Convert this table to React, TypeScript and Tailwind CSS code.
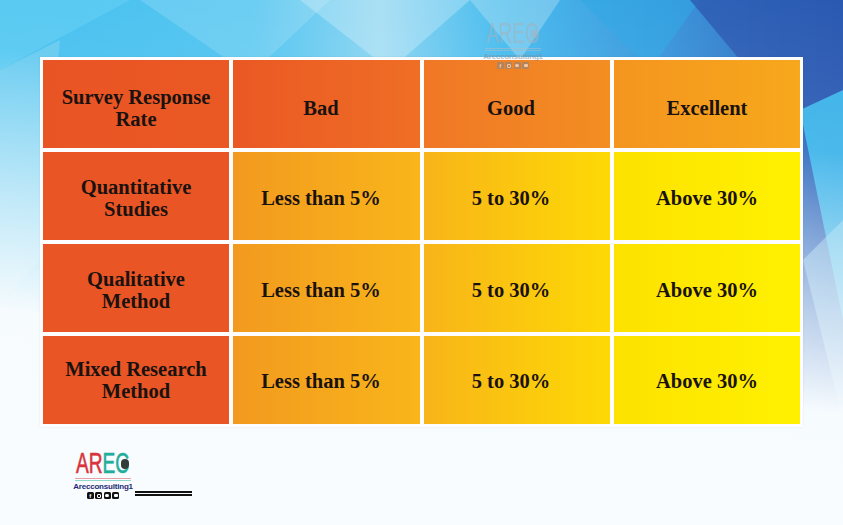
import React from "react";

const serif = { fontFamily: '"Liberation Serif", "Times New Roman", serif' };
const sans = { fontFamily: '"Liberation Sans", Arial, sans-serif' };

function Background() {
  return (
    <svg className="absolute inset-0" width="843" height="525" viewBox="0 0 843 525" preserveAspectRatio="none">
      <defs>
        <linearGradient id="sky" x1="0" y1="0" x2="1" y2="0">
          <stop offset="0" stopColor="#3fbdee" />
          <stop offset="0.3" stopColor="#4cc3f0" />
          <stop offset="0.45" stopColor="#8ad4f1" />
          <stop offset="0.6" stopColor="#45bbee" />
          <stop offset="0.78" stopColor="#3a97dc" />
          <stop offset="1" stopColor="#2c5fb8" />
        </linearGradient>
        <linearGradient id="fade" x1="1" y1="0" x2="0.8" y2="1">
          <stop offset="0" stopColor="#ffffff" stopOpacity="0" />
          <stop offset="0.28" stopColor="#ffffff" stopOpacity="0.08" />
          <stop offset="0.55" stopColor="#f4fafd" stopOpacity="0.65" />
          <stop offset="0.76" stopColor="#f6fbfe" stopOpacity="1" />
          <stop offset="1" stopColor="#f8fcfe" stopOpacity="1" />
        </linearGradient>
      </defs>
      <rect x="0" y="0" width="843" height="525" fill="url(#sky)" />
      <polygon points="0,0 130,0 0,70" fill="#5bcdf4" opacity="0.6" />
      <polygon points="0,70 60,40 40,260 0,300" fill="#7fd3f2" opacity="0.5" />
      <polygon points="140,0 330,0 250,75" fill="#ffffff" opacity="0.15" />
      <polygon points="300,0 470,0 390,70" fill="#ffffff" opacity="0.25" />
      <polygon points="470,0 560,0 520,60" fill="#b9e4f5" opacity="0.4" />
      <polygon points="580,0 700,0 650,70" fill="#2fa7e5" opacity="0.6" />
      <polygon points="690,0 843,0 843,150 790,120" fill="#2a57b0" opacity="0.8" />
      <polygon points="800,110 843,90 843,320" fill="#3dbbee" opacity="0.9" />
      <polygon points="803,260 843,220 843,420" fill="#9dd9f2" opacity="0.5" />
      <rect x="0" y="0" width="843" height="525" fill="url(#fade)" />
    </svg>
  );
}

function Icons({ dark }: { dark: string }) {
  return (
    <div className="flex gap-[1.5px]">
      <div className="w-[7px] h-[7px] rounded-[1.5px] flex items-center justify-center" style={{ background: dark }}>
        <span className="text-white text-[6px] font-bold leading-none" style={sans}>f</span>
      </div>
      <div className="w-[7px] h-[7px] rounded-[1.5px] flex items-center justify-center" style={{ background: dark }}>
        <div className="w-[4px] h-[4px] rounded-[1px] border border-white" />
      </div>
      <div className="w-[7px] h-[7px] rounded-[1.5px] flex items-center justify-center" style={{ background: dark }}>
        <div className="w-[4px] h-[3px] rounded-full bg-white" />
      </div>
      <div className="w-[7px] h-[7px] rounded-[1.5px] flex items-center justify-center" style={{ background: dark }}>
        <div className="w-[4px] h-[3px] rounded-[1px] bg-white" />
      </div>
    </div>
  );
}

function Logo({ mono }: { mono?: boolean }) {
  const red = mono ? "#a4b2bd" : "#d8343d";
  const teal = mono ? "#a4b2bd" : "#25ad9b";
  const navy = mono ? "#7f8c98" : "#1e2a74";
  return (
    <div className="flex flex-col items-center w-[62px]">
      <div className="relative w-[54px] h-[22px]">
        <span
          className="absolute left-0 top-[-6px] text-[29px] leading-none origin-left scale-x-[0.66] whitespace-nowrap"
          style={{ ...sans, WebkitTextStroke: mono ? "0" : "0.6px currentColor" }}
        >
          <span style={{ color: red }}>AR</span>
          <span style={{ color: teal }}>EC</span>
        </span>
        <div
          className="absolute right-[1px] top-[4px] w-[8px] h-[10px] rounded-full"
          style={{ background: mono ? "#a7b3bd" : "#333a3a" }}
        />
      </div>
      <div className="w-[56px] flex flex-col gap-[1px] mt-[1px]">
        <div className="h-[1px]" style={{ background: mono ? "#b0bcc6" : "#e9a0a4" }} />
        <div className="h-[1px]" style={{ background: mono ? "#b0bcc6" : "#8fd6cc" }} />
      </div>
      <div
        className="text-[8px] font-bold leading-[9px] tracking-[-0.2px] whitespace-nowrap mt-[1px]"
        style={{ ...sans, color: navy }}
      >
        Arecconsulting1
      </div>
      <div className="mt-[1px]">
        <Icons dark={mono ? "#7d8790" : "#111111"} />
      </div>
    </div>
  );
}

type Cell = { text: string[]; bg: string; pr?: string; pt?: string };

const head = "#e95524";

const rows: Cell[][] = [
  [
    { text: ["Survey Response", "Rate"], bg: "linear-gradient(90deg,#e95424,#ea5924)", pt: "pt-[8px]" },
    { text: ["Bad"], bg: "linear-gradient(90deg,#ea5824,#ef6e25)", pr: "pr-[11px]", pt: "pt-[7px]" },
    { text: ["Good"], bg: "linear-gradient(90deg,#f07726,#f38e22)", pr: "pr-[12px]", pt: "pt-[7px]" },
    { text: ["Excellent"], bg: "linear-gradient(90deg,#f4951f,#f7a81c)", pt: "pt-[7px]" },
  ],
  ...[
    ["Quantitative", "Studies"],
    ["Qualitative", "Method"],
  ].map((label) => [
    { text: label, bg: head, pt: "pt-[4px]" },
    { text: ["Less than 5%"], bg: "linear-gradient(90deg,#f29a1f,#f9b51a)", pr: "pr-[11px]", pt: "pt-[4px]" },
    { text: ["5 to 30%"], bg: "linear-gradient(90deg,#f8b419,#fdd905)", pr: "pr-[12px]", pt: "pt-[4px]" },
    { text: ["Above 30%"], bg: "linear-gradient(90deg,#fde200,#fff100)", pt: "pt-[4px]" },
  ]),
  [
    { text: ["Mixed Research", "Method"], bg: head, pt: "pt-[0px]" },
    { text: ["Less than 5%"], bg: "linear-gradient(90deg,#f29a1f,#f9b51a)", pr: "pr-[11px]", pt: "pt-[2px]" },
    { text: ["5 to 30%"], bg: "linear-gradient(90deg,#f8b419,#fdd905)", pr: "pr-[12px]", pt: "pt-[2px]" },
    { text: ["Above 30%"], bg: "linear-gradient(90deg,#fde200,#fff100)", pt: "pt-[2px]" },
  ],
];

export default function App() {
  return (
    <div className="relative w-[843px] h-[525px] overflow-hidden bg-white">
      <Background />
      <div className="relative flex flex-col pt-[57px] pl-[40px]">
        <div className="grid grid-cols-[186px_187px_186px_186px] grid-rows-[88px_88px_88px_88px] gap-[4px] p-[3px] bg-[#fdfdfd] w-[763px] shadow-[0_0_2px_rgba(0,0,0,0.08)]">
          {rows.flat().map((c, i) => (
            <div
              key={i}
              className={`flex flex-col items-center justify-center text-center text-[20.5px] leading-[22px] font-bold text-[#1a1210] ${c.pr ?? ""} ${c.pt ?? ""}`}
              style={{ ...serif, background: c.bg }}
            >
              {c.text.map((t, j) => (
                <span key={j} className="whitespace-nowrap">
                  {t}
                </span>
              ))}
            </div>
          ))}
        </div>
        <div className="flex items-end mt-[28px] ml-[32px]">
          <Logo />
          <div className="flex flex-col gap-[1.5px] mb-[3px] ml-[1px]">
            <div className="w-[57px] h-[2px] bg-[#111]" />
            <div className="w-[57px] h-[2px] bg-[#111]" />
          </div>
        </div>
      </div>
      <div className="absolute left-[482px] top-[25px] opacity-55">
        <Logo mono />
      </div>
    </div>
  );
}
